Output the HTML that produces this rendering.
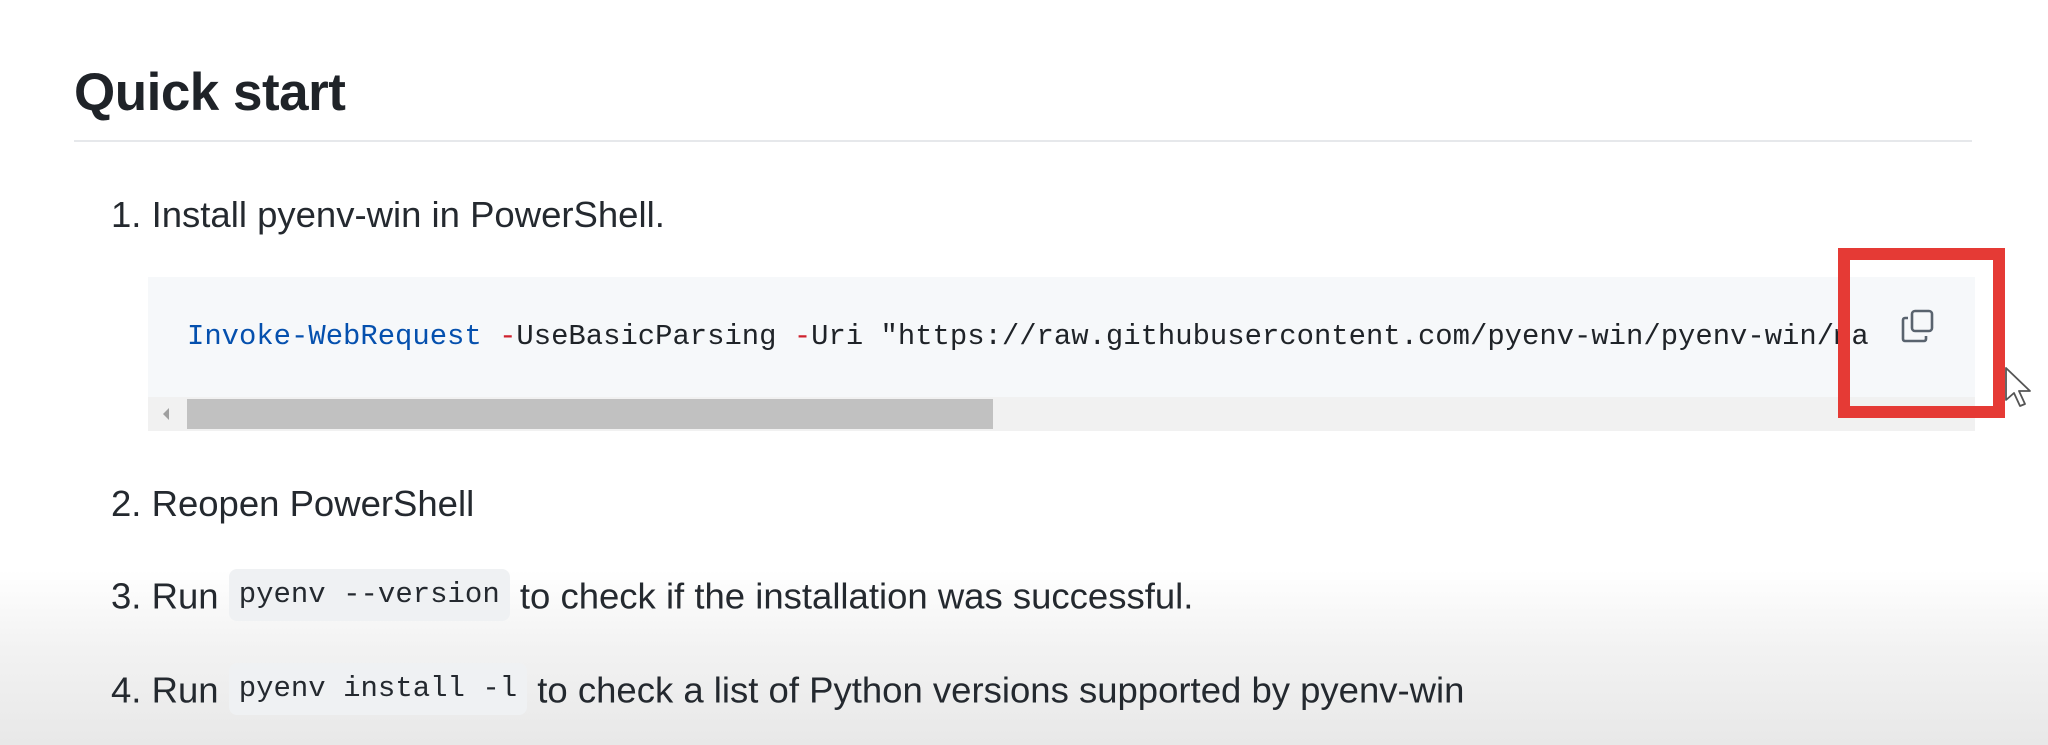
<!DOCTYPE html>
<html><head><meta charset="utf-8"><style>
html,body{margin:0;padding:0;}
body{width:2048px;height:745px;position:relative;overflow:hidden;background:#fff;font-family:"Liberation Sans",sans-serif;color:#1f2328;}
.bg{position:absolute;left:0;top:0;width:2048px;height:745px;background:linear-gradient(to bottom,#fff 0,#fff 570px,#f2f2f2 650px,#e8e8e8 745px);}
h1{position:absolute;left:74px;top:61px;margin:0;font-size:53px;font-weight:bold;line-height:64px;letter-spacing:-0.5px;}
.rule{position:absolute;left:74px;top:140px;width:1898px;height:2px;background:#e6e8eb;}
.li{position:absolute;left:111px;font-size:36.5px;line-height:40px;white-space:nowrap;color:#24292f;}
.mono{font-family:"Liberation Mono",monospace;}
.code{position:absolute;left:148px;top:277px;width:1827px;height:154px;background:#f6f8fa;}
.ct{position:absolute;left:39px;top:40px;width:1683px;overflow:hidden;font-size:28.9px;line-height:40px;white-space:nowrap;color:#1f2328;}
.track{position:absolute;left:0;top:120px;width:1827px;height:34px;background:#f1f1f1;}
.thumb{position:absolute;left:39px;top:2px;width:806px;height:30px;background:#c1c1c1;}
.ic{display:inline-block;background:#eff1f3;border-radius:8px;padding:0 10px;font-family:"Liberation Mono",monospace;font-size:29px;line-height:52px;vertical-align:middle;position:relative;top:-4px;}
</style></head><body>
<div class="bg"></div>
<h1>Quick start</h1>
<div class="rule"></div>
<div class="li" style="top:195px">1. Install pyenv-win in PowerShell.</div>
<div class="code">
 <div class="ct mono"><span style="color:#0550ae">Invoke-WebRequest</span> <span style="color:#cf222e">-</span>UseBasicParsing <span style="color:#cf222e">-</span>Uri "https://raw.githubusercontent.com/pyenv-win/pyenv-win/master/pyenv-win/install-pyenv-win.ps1"</div>
 <div class="track"><div class="thumb"></div>
  <svg style="position:absolute;left:13px;top:9px" width="10" height="16"><path d="M8 2 L2 8 L8 14 Z" fill="#a0a0a0"/></svg>
 </div>
 <svg style="position:absolute;left:1752px;top:31px" width="38" height="36" viewBox="0 0 38 36"><rect x="12" y="3" width="20" height="20" rx="3" fill="none" stroke="#59636e" stroke-width="2.6"/><path d="M8 10 H5 a2 2 0 0 0 -2 2 V31 a2 2 0 0 0 2 2 H24 a2 2 0 0 0 2 -2 V28" fill="none" stroke="#59636e" stroke-width="2.6"/></svg>
</div>
<div style="position:absolute;left:1838px;top:248px;width:143px;height:146px;border:12px solid #e53a35;"></div>
<svg style="position:absolute;left:2004px;top:366px" width="30" height="44" viewBox="0 0 30 44"><path d="M2 2 L2 34 L10 27 L16 40 L21 38 L15 25 L26 25 Z" fill="#fff" stroke="#555" stroke-width="1.8" stroke-linejoin="round"/></svg>
<div class="li" style="top:484px">2. Reopen PowerShell</div>
<div class="li" style="top:573px">3. Run <span class="ic">pyenv --version</span> to check if the installation was successful.</div>
<div class="li" style="top:667px">4. Run <span class="ic">pyenv install -l</span> to check a list of Python versions supported by pyenv-win</div>
</body></html>
